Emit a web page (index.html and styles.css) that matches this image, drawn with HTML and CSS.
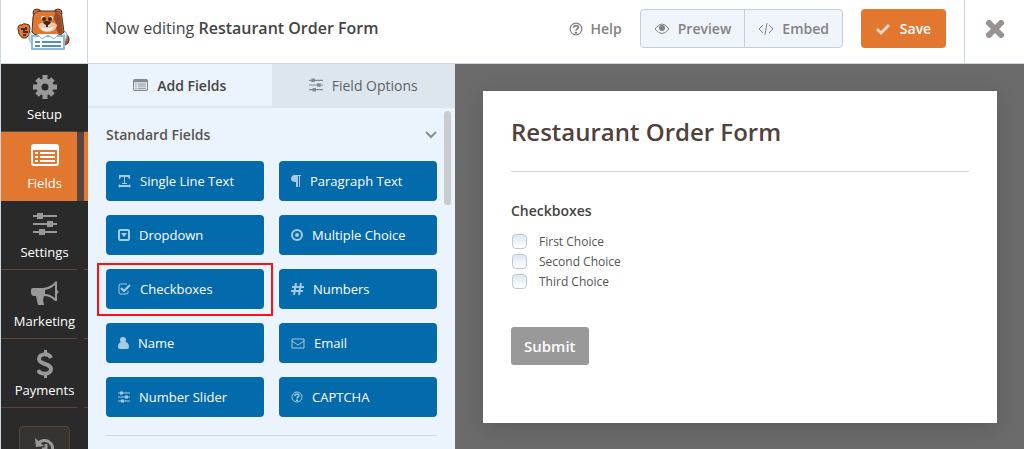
FILE: index.html
```html
<!DOCTYPE html>
<html lang="en">
<head>
    <meta charset="UTF-8">
    <meta name="viewport" content="width=device-width, initial-scale=1.0">
    <title>Form Builder - Restaurant Order Form</title>
    <link rel="stylesheet" href="styles.css">
</head>
<body>
    <!-- icons used more than once -->
    <svg class="defs" width="0" height="0" aria-hidden="true">
        <symbol id="sliders" viewBox="0 0 24 24">
            <path d="M0 3h24v2H0zM0 11h24v2H0zM0 19h24v2H0z"/>
            <path d="M4 1h6v6H4zM14 9h6v6h-6zM6 17h6v6H6z"/>
        </symbol>
        <symbol id="list" viewBox="0 0 28 22">
            <path fill-rule="evenodd" d="M3 0h22a3 3 0 0 1 3 3v16a3 3 0 0 1-3 3H3a3 3 0 0 1-3-3V3a3 3 0 0 1 3-3zM2 6v13l1 1h22l1-1V6zM4 8h3v2H4zM9 8h15v2H9zM4 12h3v2H4zM9 12h15v2H9zM4 16h3v2H4zM9 16h15v2H9z"/>
        </symbol>
        <symbol id="question" viewBox="0 0 24 24">
            <circle cx="12" cy="12" r="10" fill="none" stroke="currentColor" stroke-width="2"/>
            <path fill="none" stroke="currentColor" stroke-width="3" d="M8 10c0-5 8-5 8-1 0 3-4 2-4 6"/>
            <path d="M10 17h4v3h-4z"/>
        </symbol>
    </svg>

    <header>
        <a class="logo" href="#home" aria-label="Home">
            <svg width="54" height="44" viewBox="0 0 54 44">
                <g stroke="#4b302a" stroke-width="1">
                    <circle cx="20" cy="6" r="4" fill="#e27730"/>
                    <circle cx="41" cy="6" r="4" fill="#e27730"/>
                    <path fill="#b85a28" d="M46 27h3q5 4 2 9-2 3-6 1z"/>
                    <path fill="#e27730" d="M1 20q1-3 4-2 1-2 4-1 4 0 4 4l-1 7q-2 4-6 3-5-2-5-11z"/>
                </g>
                <path fill="#d9e8f1" stroke="#8db9d2" d="M16 24q-5 1-4 8l4 8h31v-6h1q5-9-2-10z"/>
                <path fill="#e27730" stroke="#4b302a" d="M15 25l1-15q1-6 8-6h13q8 0 8 6l2 15q-3 4-7 3H21q-4 0-6-3z"/>
                <path fill="#9a4b26" d="M38 5q6 1 6 6l2 14q-2 2-4 2l-3-5 1-4-3-6z"/>
                <path fill="none" stroke="#4b302a" stroke-width="2" d="M4 22h3v3h4M9 20v3M6 28h3"/>
                <path fill="#efc9ae" d="M21 18q4-4 9-2 6-2 10 2-1 7-10 7-7 0-9-7z"/>
                <path fill="#fff" d="M24 20q6 3 12 0-1 4-6 4t-6-4z"/>
                <circle cx="26" cy="11" r="2" fill="#f7e5d8"/>
                <circle cx="34" cy="11" r="2" fill="#f7e5d8"/>
                <circle cx="27" cy="12" r="2" fill="#3b2823"/>
                <circle cx="33" cy="12" r="2" fill="#3b2823"/>
                <path fill="#3b2823" d="M26 15q4-2 8 0-1 3-3 3v2h-2v-2q-2 0-3-3z"/>
                <path fill="#fff" stroke="#8db9d2" stroke-width="2" d="M15 29h32v13H15z"/>
                <path fill="#fff" stroke="#8db9d2" d="M20 27l5 5 6-4 6 4 5-5"/>
                <path fill="#4d91bd" d="M18 34h5v2h-5zM25 34h19v2H25zM18 38h5v2h-5zM25 38h19v2H25z"/>
            </svg>
        </a>
        <p class="editing">Now editing <strong>Restaurant Order Form</strong></p>
        <a class="help" href="#help">
            <svg width="14" height="14"><use href="#question"/></svg>
            Help
        </a>
        <div class="btn-group">
            <button type="button">
                <svg width="16" height="12" viewBox="0 0 16 12">
                    <path fill="none" stroke="currentColor" d="M1 6q7-10 14 0-7 9-14 0z"/>
                    <circle cx="8" cy="5" r="3"/>
                </svg>
                Preview
            </button>
            <button type="button">
                <svg width="16" height="12" viewBox="0 0 16 12">
                    <path fill="none" stroke="currentColor" d="M5 2L1 6l4 4M11 2l4 4-4 4M9 0L7 12"/>
                </svg>
                Embed
            </button>
        </div>
        <button type="button" class="save">
            <svg width="14" height="12" viewBox="0 0 14 12">
                <path fill="none" stroke="currentColor" stroke-width="3" d="M1 6l4 4 8-8"/>
            </svg>
            Save
        </button>
        <button type="button" class="close" aria-label="Close">
            <svg width="18" height="18" viewBox="0 0 18 18">
                <path fill="none" stroke="currentColor" stroke-width="6" stroke-linecap="round" d="M3 3l12 12M15 3L3 15"/>
            </svg>
        </button>
    </header>

    <div class="builder">
        <nav>
            <a href="#setup">
                <svg width="24" height="24" viewBox="0 0 24 24">
                    <g fill="none" stroke="currentColor">
                        <circle cx="12" cy="12" r="6" stroke-width="5"/>
                        <path stroke-width="5" d="M12 0v4M12 20v4M0 12h4M20 12h4M4 4l3 3M17 17l3 3M20 4l-3 3M7 17l-3 3"/>
                    </g>
                </svg>
                Setup
            </a>
            <a href="#fields" class="active">
                <svg width="28" height="24"><use href="#list"/></svg>
                Fields
            </a>
            <a href="#settings">
                <svg width="24" height="24"><use href="#sliders"/></svg>
                Settings
            </a>
            <a href="#marketing">
                <svg width="28" height="24" viewBox="0 0 28 24">
                    <path fill-rule="evenodd" d="M2 7h10q8-1 13-7l1 1v8q3 2 0 4v7h-2q-5-5-11-5l-1 4 1 5H7L5 15H2q-2-1-2-3V9q0-2 2-2zM14 9v4q5 0 10 4V4q-4 4-10 5z"/>
                </svg>
                Marketing
            </a>
            <a href="#payments">
                <svg width="16" height="28" viewBox="0 0 16 28">
                    <path fill="none" stroke="currentColor" stroke-width="4" d="M14 8C12 3 2 3 2 9c0 6 12 4 12 10 0 6-11 6-13 1"/>
                    <path d="M7 0h3v5H7zM7 23h3v5H7z"/>
                </svg>
                Payments
            </a>
            <button type="button" class="history" aria-label="Revisions">
                <svg width="22" height="22" viewBox="0 0 22 22">
                    <path fill="none" stroke="currentColor" stroke-width="3" d="M4 7a8 8 0 1 1 0 9M12 7v5H8"/>
                    <path d="M1 1l1 9 8-1z"/>
                </svg>
            </button>
        </nav>

        <aside>
            <div class="tabs">
                <button type="button" class="active">
                    <svg width="15" height="12"><use href="#list"/></svg>
                    Add Fields
                </button>
                <button type="button">
                    <svg width="14" height="14"><use href="#sliders"/></svg>
                    Field Options
                </button>
            </div>
            <div class="panel">
                <h2>
                    Standard Fields
                    <svg width="12" height="8" viewBox="0 0 12 8">
                        <path fill="none" stroke="currentColor" stroke-width="2" d="M1 1l5 5 5-5"/>
                    </svg>
                </h2>
                <div class="fields">
                    <button type="button">
                        <svg width="13" height="13" viewBox="0 0 13 13">
                            <path d="M1 0h11v4h-1l-1-2H7v6h2v1H4V8h2V2H3L2 4H1zM0 11l2-2v1h9V9l2 2-2 2v-1H2v1z"/>
                        </svg>
                        Single Line Text
                    </button>
                    <button type="button">
                        <svg width="10" height="12" viewBox="0 0 10 12">
                            <path d="M4 0h6v1H9v11H8V1H7v11H5V7Q0 7 0 4 0 0 4 0z"/>
                        </svg>
                        Paragraph Text
                    </button>
                    <button type="button">
                        <svg width="12" height="12" viewBox="0 0 12 12">
                            <rect x="1" y="1" width="10" height="10" rx="1" fill="none" stroke="currentColor" stroke-width="2"/>
                            <path d="M3 4h6L6 8z"/>
                        </svg>
                        Dropdown
                    </button>
                    <button type="button">
                        <svg width="12" height="12" viewBox="0 0 12 12">
                            <circle cx="6" cy="6" r="5" fill="none" stroke="currentColor" stroke-width="2"/>
                            <circle cx="6" cy="6" r="2"/>
                        </svg>
                        Multiple Choice
                    </button>
                    <button type="button" class="highlight">
                        <svg width="13" height="12" viewBox="0 0 13 12">
                            <path fill="none" stroke="currentColor" d="M9 1H2L1 2v8l1 1h7l1-1V8"/>
                            <path fill="none" stroke="currentColor" stroke-width="2" d="M3 5l3 3 6-6"/>
                        </svg>
                        Checkboxes
                    </button>
                    <button type="button">
                        <svg width="13" height="12" viewBox="0 0 13 12">
                            <path fill="none" stroke="currentColor" stroke-width="2" d="M5 0L3 12M10 0L8 12M1 4h12M0 8h12"/>
                        </svg>
                        Numbers
                    </button>
                    <button type="button">
                        <svg width="11" height="12" viewBox="0 0 11 12">
                            <circle cx="5" cy="3" r="3"/>
                            <path d="M3 5h5q3 1 3 5 0 2-2 2H2q-2 0-2-2 0-4 3-5z"/>
                        </svg>
                        Name
                    </button>
                    <button type="button">
                        <svg width="14" height="11" viewBox="0 0 14 11">
                            <path fill="none" stroke="currentColor" d="M1 1h12v9H1zM1 3l6 4 6-4"/>
                        </svg>
                        Email
                    </button>
                    <button type="button">
                        <svg width="12" height="12"><use href="#sliders"/></svg>
                        Number Slider
                    </button>
                    <button type="button">
                        <svg width="12" height="12"><use href="#question"/></svg>
                        CAPTCHA
                    </button>
                </div>
                <div class="scrollbar"></div>
            </div>
        </aside>

        <main>
            <form class="preview">
                <h1>Restaurant Order Form</h1>
                <fieldset>
                    <legend>Checkboxes</legend>
                    <label><input type="checkbox" name="choice" value="1"> First Choice</label>
                    <label><input type="checkbox" name="choice" value="2"> Second Choice</label>
                    <label><input type="checkbox" name="choice" value="3"> Third Choice</label>
                </fieldset>
                <button type="button" class="submit">Submit</button>
            </form>
        </main>
    </div>
</body>
</html>
```

FILE: styles.css
```css
* {
    box-sizing: border-box;
}
body {
    font-family: "Open Sans", "Noto Sans", sans-serif;
    margin: 0;
    height: 100vh;
    display: flex;
    flex-direction: column;
    overflow: hidden;
    background-color: #fff;
    color: #444;
}
button {
    font-family: inherit;
    border: none;
    margin: 0;
    padding: 0;
    cursor: pointer;
}
a {
    text-decoration: none;
}
svg {
    fill: currentColor;
    flex-shrink: 0;
}
.defs {
    position: absolute;
}

/* header */
header {
    display: flex;
    align-items: center;
    height: 64px;
    flex-shrink: 0;
    border-bottom: 1px solid #ced7e0;
}
.logo {
    display: flex;
    align-items: center;
    justify-content: center;
    width: 88px;
    height: 100%;
    padding-bottom: 6px;
    border-left: 1px solid #ced7e0;
    border-right: 1px solid #ced7e0;
}
.editing {
    margin: 0 auto 0 17px;
    font-size: 16px;
    line-height: 24px;
    padding-bottom: 8px;
}
.editing strong {
    font-weight: 600;
}
.help {
    display: flex;
    align-items: center;
    gap: 8px;
    margin-right: 18px;
    padding-bottom: 6px;
    color: #86807f;
    font-size: 14px;
    font-weight: 600;
}
.btn-group {
    display: flex;
    height: 39px;
    margin: 0 18px 6px 0;
    border: 1px solid #c3cfdd;
    border-radius: 4px;
    background-color: #f0f5fc;
}
.btn-group button {
    display: flex;
    align-items: center;
    gap: 8px;
    padding: 0 13px;
    background: none;
    color: #86807f;
    font-size: 14px;
    font-weight: 600;
}
.btn-group button + button {
    border-left: 1px solid #c3cfdd;
}
.save {
    display: flex;
    align-items: center;
    justify-content: center;
    gap: 10px;
    width: 85px;
    height: 39px;
    margin: 0 18px 6px 0;
    border-radius: 4px;
    background-color: #e27730;
    color: #fff;
    font-size: 14px;
    font-weight: 600;
}
.save svg {
    color: #e6d5cc;
}
.close {
    display: flex;
    align-items: center;
    justify-content: center;
    width: 60px;
    height: 100%;
    padding-bottom: 6px;
    border-left: 1px solid #ced7e0;
    background: none;
    color: #999291;
}

/* layout */
.builder {
    display: flex;
    flex: 1;
    min-height: 0;
}
nav {
    display: flex;
    flex-direction: column;
    width: 88px;
    flex-shrink: 0;
    overflow: hidden;
    border-left: 1px solid #ced7e0;
    background-color: #2b2a2a;
}
nav a {
    display: flex;
    flex-direction: column;
    align-items: center;
    justify-content: space-between;
    height: 69px;
    flex-shrink: 0;
    padding: 11px 0 8px;
    background: linear-gradient(to right, #5a443c 76px, transparent 76px, transparent 83px, #5a443c 83px) bottom / 100% 1px no-repeat;
    color: #fff;
    font-size: 13px;
    line-height: 20px;
}
nav a:first-child {
    height: 68px;
}
nav a svg {
    color: #999;
}
nav a.active {
    background: linear-gradient(to right, #e27730 76px, #5a443c 76px, #5a443c 83px, #e27730 83px);
}
nav a.active svg {
    color: #fff;
}
.history {
    display: flex;
    justify-content: center;
    flex-shrink: 0;
    width: 51px;
    height: 51px;
    margin: 18px auto 0;
    padding-top: 10px;
    border: 1px solid #5a443c;
    border-radius: 4px;
    background-color: #373331;
    color: #999;
}

/* fields panel */
aside {
    display: flex;
    flex-direction: column;
    width: 367px;
    flex-shrink: 0;
    background-color: #ebf3fc;
}
.tabs {
    display: flex;
    flex-shrink: 0;
    height: 44px;
}
.tabs button {
    display: flex;
    flex: 1;
    align-items: center;
    justify-content: center;
    gap: 9px;
    background-color: #dde6ed;
    color: #5f6367;
    font-size: 14px;
    border-bottom: 2px solid #dde6ed;
}
.tabs .active {
    background-color: #ebf3fc;
    color: #444;
    font-weight: 600;
}
.tabs svg {
    color: #858a8f;
}
.panel {
    position: relative;
    flex: 1;
    padding: 0 18px;
}
.panel h2 {
    display: flex;
    align-items: center;
    justify-content: space-between;
    margin: 0;
    height: 53px;
    font-size: 14px;
    font-weight: 600;
    color: #555;
}
.panel h2 svg {
    color: #86919d;
}
.fields {
    display: grid;
    grid-template-columns: 1fr 1fr;
    gap: 14px 15px;
    padding-bottom: 18px;
    border-bottom: 1px solid #ced7e0;
}
.fields button {
    display: flex;
    align-items: center;
    gap: 9px;
    height: 40px;
    padding: 0 12px;
    border-radius: 4px;
    background-color: #036aab;
    color: #fff;
    font-size: 13px;
    font-weight: 500;
}
.fields svg {
    color: #a5cae2;
}
.fields .highlight {
    position: relative;
}
.highlight::after {
    content: "";
    position: absolute;
    inset: -6px -9px -7px;
    border: 2px solid #f11;
}
.scrollbar {
    position: absolute;
    top: 3px;
    right: 4px;
    width: 7px;
    height: 94px;
    border-radius: 4px;
    background-color: #c9cccf;
}

/* form preview */
main {
    flex: 1;
    padding: 27px 27px 26px 28px;
    background-color: #6b6b6b;
}
.preview {
    min-height: 332px;
    padding: 24px 28px;
    background-color: #fff;
    box-shadow: 0 5px 20px rgba(0, 0, 0, 0.15);
}
.preview h1 {
    margin: 0 0 30px;
    padding-bottom: 22px;
    border-bottom: 1px solid #ced7e0;
    color: #50413d;
    font-size: 24px;
    font-weight: 600;
    line-height: 34px;
}
.preview fieldset {
    margin: 0;
    padding: 0;
    border: none;
}
.preview legend {
    margin-bottom: 12px;
    padding: 0;
    font-size: 14px;
    font-weight: 600;
    line-height: 18px;
}
.preview label {
    display: flex;
    align-items: center;
    gap: 12px;
    font-size: 12px;
    line-height: 20px;
    color: #555;
}
.preview input {
    appearance: none;
    width: 15px;
    height: 15px;
    margin: 0 0 2px 1px;
    border: 1px solid #bfc9d3;
    border-radius: 4px;
    background: linear-gradient(#dde7f1, #fff);
}
.submit {
    margin-top: 35px;
    padding: 0 13px;
    height: 38px;
    border-radius: 3px;
    background-color: #999;
    color: #fff;
    font-size: 15px;
    font-weight: 600;
}
```
